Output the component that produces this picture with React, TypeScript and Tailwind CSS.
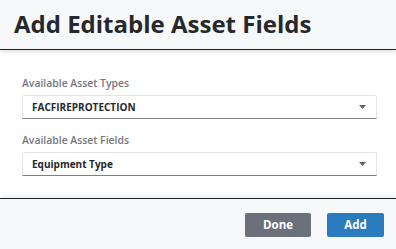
import React from "react";

type FieldProps = {
  label: string;
  value: string;
};

function SelectField({ label, value }: FieldProps) {
  return (
    <div>
      <div className="text-[10.4px] font-semibold leading-[14px] text-[#75787d]">{label}</div>
      <div className="mt-[5px] flex h-[24px] items-center justify-between rounded-t-[2px] border border-[#e3e4e6] border-b-[#7c7f84] bg-white pl-[9px] pr-[10px]">
        <span className="text-[10px] font-bold text-[#25282c]">{value}</span>
        <svg width="7" height="4" viewBox="0 0 7 4">
          <path d="M0 0 L7 0 L3.5 4 Z" fill="#5f6267" />
        </svg>
      </div>
    </div>
  );
}

export default function App() {
  return (
    <div className="flex h-[249px] w-[396px] flex-col bg-white" style={{ fontFamily: '"Open Sans", sans-serif' }}>
      <div className="relative z-10 h-[50px] border-b border-[#1f2124] bg-[#f7f8fa] pl-[14px] pt-[8px] shadow-[0_2px_4px_rgba(0,0,0,0.12)]">
        <h1 className="text-[24px] font-bold leading-[32px] text-[#25282c]">Add Editable Asset Fields</h1>
      </div>

      <div className="flex-1 pl-[22px] pr-[19px] pt-[26px]">
        <SelectField label="Available Asset Types" value="FACFIREPROTECTION" />
        <div className="mt-[14px]">
          <SelectField label="Available Asset Fields" value="Equipment Type" />
        </div>
      </div>

      <div className="flex h-[51px] justify-end gap-[16px] border-t border-[#1f2124] bg-[#f7f8fa] pr-[12px] pt-[14px] shadow-[0_-3px_5px_rgba(0,0,0,0.06)]">
        <button className="h-[24px] w-[66px] rounded-[2px] bg-[#6b707a] text-[11.5px] font-bold text-white">Done</button>
        <button className="h-[24px] w-[57px] rounded-[2px] bg-[#2a7cbf] text-[11.5px] font-bold text-white">Add</button>
      </div>
    </div>
  );
}
